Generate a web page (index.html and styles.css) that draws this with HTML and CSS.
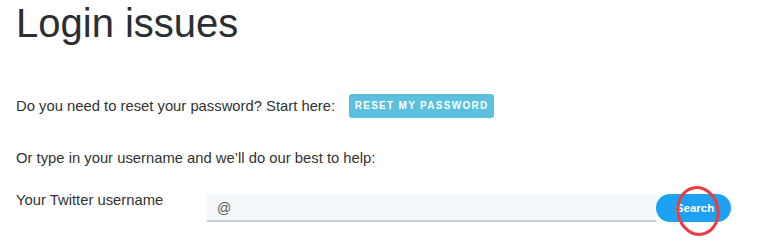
FILE: index.html
```html
<!DOCTYPE html>
<html>
<head>
<meta charset="utf-8">
<link rel="stylesheet" href="styles.css">
</head>
<body>
<div class="page">
  <h1 class="title">Login issues</h1>
  <p class="line reset-line">Do you need to reset your password? Start here: <a class="reset-btn" href="#">Reset my password</a></p>
  <p class="line">Or type in your username and we’ll do our best to help:</p>
  <form class="search-row">
    <label class="label">Your Twitter username</label>
    <div class="field">
      <input class="input" type="text" value="@">
      <span class="search-wrap"><button class="search-btn" type="button">Search</button><svg class="circle" width="50" height="56" viewBox="0 0 50 56"><ellipse cx="25" cy="28" rx="20" ry="23.5" transform="rotate(-12 25 28)" fill="none" stroke="#ee3b3f" stroke-width="3"/></svg></span>
    </div>
  </form>
</div>
</body>
</html>
```
FILE: styles.css
```css
html, body { margin: 0; padding: 0; background: #fff; }
body { font-family: "Liberation Sans", Arial, sans-serif; color: #333; }
.page { padding: 0 37px 30px 16px; }
.title {
  font-size: 40px;
  font-weight: normal;
  color: #292f33;
  margin: 0;
  line-height: 46px;
}
.line { font-size: 14.8px; margin: 0; line-height: 20px; }
.reset-line { margin-top: 48px; display: flex; align-items: center; }
.reset-btn {
  display: inline-block;
  margin-left: 14px;
  background: #5bc0de;
  color: #fff;
  text-decoration: none;
  text-transform: uppercase;
  font-weight: bold;
  font-size: 10px;
  letter-spacing: 1.3px;
  height: 24px;
  line-height: 24px;
  width: 145px;
  text-align: center;
  border-radius: 3px;
}
.line + .line { margin-top: 30px; }
.search-row { display: flex; margin: 26px 0 0; align-items: flex-start; }
.label { width: 191px; font-size: 14.8px; line-height: 20px; margin-top: -4px; }
.field { flex: 1; display: flex; }
.input {
  flex: 1;
  min-width: 0;
  height: 28px;
  box-sizing: border-box;
  border: 0;
  border-bottom: 2px solid #c6d0d8;
  background: #f5f8fa;
  padding: 2px 10px 0;
  font-family: "Liberation Sans", Arial, sans-serif;
  font-size: 14px;
  color: #555;
  outline: none;
}
.search-wrap { position: relative; display: block; }
.search-btn {
  display: block;
  width: 75px;
  height: 28px;
  border: 0;
  border-radius: 14px;
  background: #1da1f2;
  color: #fff;
  font-family: "Liberation Sans", Arial, sans-serif;
  font-weight: bold;
  font-size: 11.5px;
  padding: 0 0 0 3px;
}
.circle {
  position: absolute;
  z-index: 2;
  left: 17px;
  top: -11px;
}
```
